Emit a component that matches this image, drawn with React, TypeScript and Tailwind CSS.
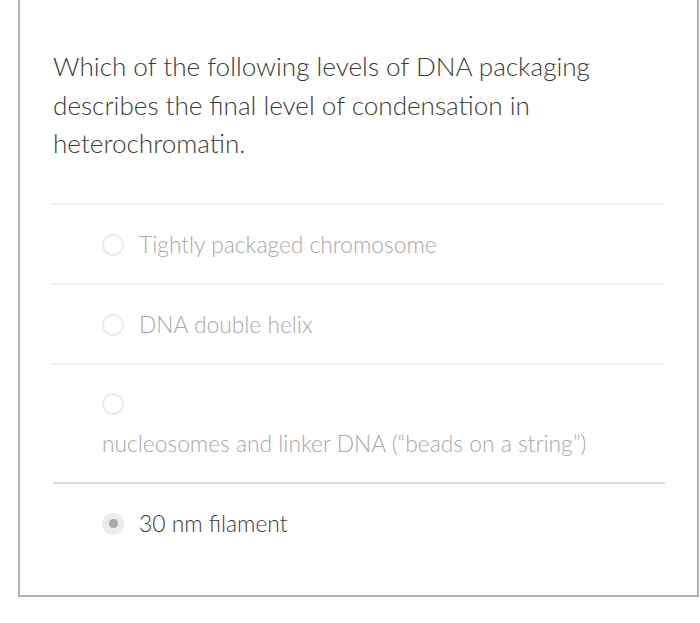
const options = [
  { label: "Tightly packaged chromosome", selected: false, stacked: false },
  { label: "DNA double helix", selected: false, stacked: false },
  { label: "nucleosomes and linker DNA (“beads on a string”)", selected: false, stacked: true },
  { label: "30 nm filament", selected: true, stacked: false },
];

const Radio = ({ selected }: { selected: boolean }) => (
  <span
    className={`flex h-[22px] w-[22px] shrink-0 items-center justify-center rounded-full ${
      selected ? "bg-[#ececec]" : "border-2 border-[#ebebeb] bg-white"
    }`}
  >
    {selected && <span className="h-[9px] w-[9px] rounded-full bg-[#a8a8a8]" />}
  </span>
);

export default function App() {
  return (
    <div className="min-h-[623px] bg-white font-['Lato','Liberation_Sans',sans-serif]">
      <div className="ml-[18px] mr-[1px] h-[597px] border-x-2 border-b-2 border-[#b3b3b3] bg-white">
        <div className="px-[33px] pt-[47px] pb-[40px]">
          <p className="text-[26.1px] font-light leading-[38.5px] text-[#3a3a3a]">
            Which of the following levels of DNA packaging describes the final level of condensation in
            heterochromatin.
          </p>
        </div>
        <div className="ml-[33px] mr-[32px]">
          {options.map((o, i) => (
            <div
              key={i}
              className={`border-t-2 ${i === 3 ? "border-[#dcdcdc]" : "border-[#efefef]"} ${
                o.stacked ? "h-[119px]" : "h-[80px]"
              }`}
            >
              {o.stacked ? (
                <div className="flex flex-col items-start pl-[49px] pt-[28px]">
                  <Radio selected={o.selected} />
                  <span className="mt-[11px] text-[22.8px] font-light text-[#a8a8a8]">{o.label}</span>
                </div>
              ) : (
                <div className="flex h-full items-center pl-[49px] pt-[2px]">
                  <Radio selected={o.selected} />
                  <span
                    className={`ml-[15px] text-[22.8px] font-light ${
                      o.selected ? "text-[#3a3a3a]" : "text-[#a8a8a8]"
                    }`}
                  >
                    {o.label}
                  </span>
                </div>
              )}
            </div>
          ))}
        </div>
      </div>
    </div>
  );
}
